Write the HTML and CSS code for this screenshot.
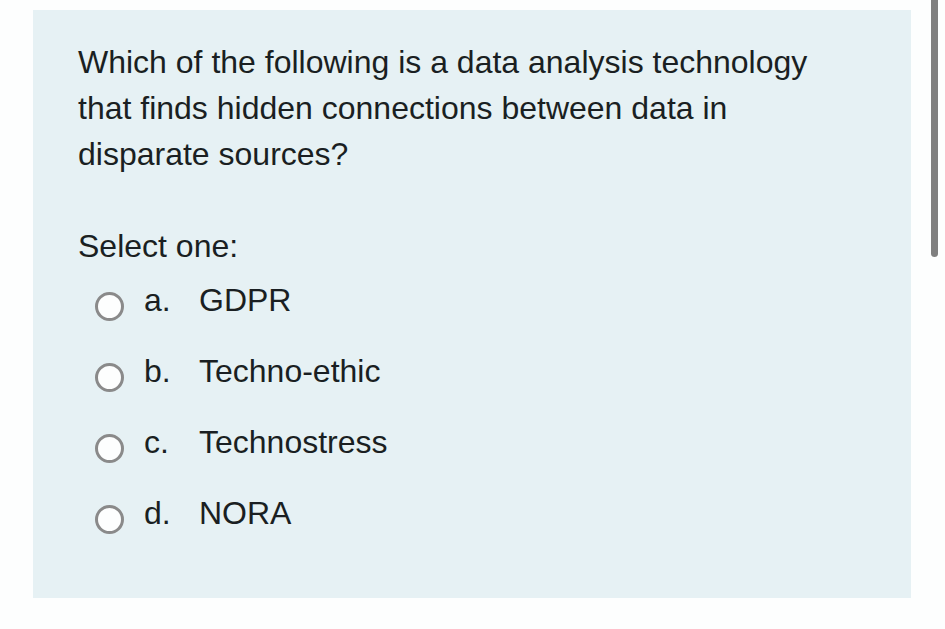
FILE: index.html
```html
<!DOCTYPE html>
<html>
<head>
<meta charset="utf-8">
<link rel="stylesheet" href="styles.css">
</head>
<body>
<div class="page">
  <div class="card">
    <div class="question">Which of the following is a data analysis technology that finds hidden connections between data in disparate sources?</div>
    <div class="prompt">Select one:</div>
    <div class="options">
      <div class="option"><span class="radio"></span><span class="letter">a.</span><span class="label">GDPR</span></div>
      <div class="option"><span class="radio"></span><span class="letter">b.</span><span class="label">Techno-ethic</span></div>
      <div class="option"><span class="radio"></span><span class="letter">c.</span><span class="label">Technostress</span></div>
      <div class="option"><span class="radio"></span><span class="letter">d.</span><span class="label">NORA</span></div>
    </div>
  </div>
  <div class="scrollbar"></div>
</div>
</body>
</html>
```
FILE: styles.css
```css
html, body {
  margin: 0;
  padding: 0;
  background: #fdfefe;
}
body {
  font-family: "Liberation Sans", Arial, sans-serif;
  color: #1a1f22;
  width: 945px;
  height: 629px;
  overflow: hidden;
}
.page {
  position: relative;
  padding: 10px 0 0 33px;
}
.card {
  width: 878px;
  height: 588px;
  box-sizing: border-box;
  background: #e6f1f4;
  padding: 29px 40px 0 45px;
}
.question {
  font-size: 32px;
  line-height: 46px;
  width: 760px;
}
.prompt {
  font-size: 32px;
  line-height: 46px;
  margin-top: 46px;
}
.options {
  display: flex;
  flex-direction: column;
  gap: 27px;
  margin-top: 9px;
}
.option {
  display: flex;
  align-items: center;
  height: 44px;
  font-size: 32px;
}
.radio {
  width: 23px;
  height: 23px;
  border: 3px solid #8a8a8a;
  border-radius: 50%;
  background: #fdfefe;
  margin: 12px 20px 0 17px;
  flex: none;
}
.letter {
  width: 55px;
}
.scrollbar {
  position: absolute;
  top: 0;
  left: 931px;
  width: 7px;
  height: 257px;
  background: #808080;
  border-radius: 0 0 4px 4px;
}
```
